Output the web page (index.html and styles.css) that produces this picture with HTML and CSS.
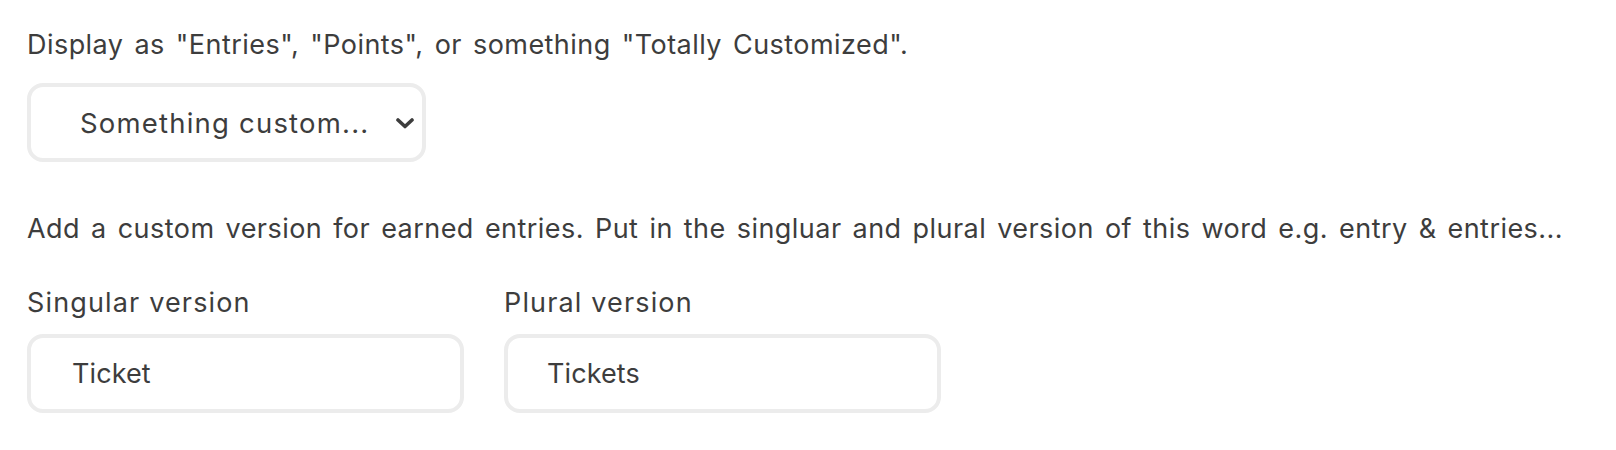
FILE: index.html
```html
<!DOCTYPE html>
<html lang="en">
<head>
<meta charset="utf-8">
<title>Custom entries</title>
<link rel="stylesheet" href="styles.css">
</head>
<body>
<div class="form">
  <p class="hint">Display as "Entries", "Points", or something "Totally Customized".</p>
  <div class="select">
    <span class="select-text">Something custom...</span>
    <svg class="chevron" width="18" height="11" viewBox="0 0 18 11" aria-hidden="true">
      <path d="M2 2 L9 8.5 L16 2" fill="none" stroke="#3d3d3d" stroke-width="3.6" stroke-linecap="round" stroke-linejoin="round"/>
    </svg>
  </div>
  <p class="hint hint-second">Add a custom version for earned entries. Put in the singluar and plural version of this word e.g. entry &amp; entries...</p>
  <div class="fields">
    <div class="field">
      <label class="label" for="singular">Singular version</label>
      <input class="input" id="singular" type="text" value="Ticket">
    </div>
    <div class="field">
      <label class="label" for="plural">Plural version</label>
      <input class="input input-plural" id="plural" type="text" value="Tickets">
    </div>
  </div>
</div>
</body>
</html>
```

FILE: styles.css
```css
html, body {
  margin: 0;
  padding: 0;
  background: #ffffff;
}

body {
  font-family: Inter, "Open Sans", "Liberation Sans", sans-serif;
  color: #3d3d3d;
}

.form {
  padding: 27px 0 0 27px;
}

.hint {
  margin: 0;
  font-size: 27px;
  line-height: 36px;
  letter-spacing: 0.45px;
  word-spacing: 3px;
  white-space: nowrap;
}

.hint-second {
  margin-top: 49px;
}

.select {
  box-sizing: border-box;
  margin-top: 20px;
  width: 399px;
  height: 79px;
  border: 4px solid #ececec;
  border-radius: 16px;
  display: flex;
  align-items: center;
  justify-content: space-between;
  padding: 0 8px 0 49px;
}

.select-text {
  font-size: 27.5px;
  line-height: 36px;
  letter-spacing: 1.2px;
}

.chevron {
  display: block;
  margin-top: 2px;
}

.fields {
  margin-top: 38px;
  display: flex;
  gap: 40px;
}

.field {
  display: flex;
  flex-direction: column;
  width: 437px;
}

.label {
  font-size: 27px;
  line-height: 36px;
  letter-spacing: 1.15px;
}

.input {
  box-sizing: border-box;
  margin: 13px 0 0 0;
  width: 437px;
  height: 79px;
  border: 4px solid #ececec;
  border-radius: 16px;
  padding: 0 0 0 41px;
  font-family: inherit;
  font-size: 27px;
  letter-spacing: 0.1px;
  color: #3d3d3d;
  background: #ffffff;
  outline: none;
}

.input-plural {
  padding-left: 39px;
}
```
